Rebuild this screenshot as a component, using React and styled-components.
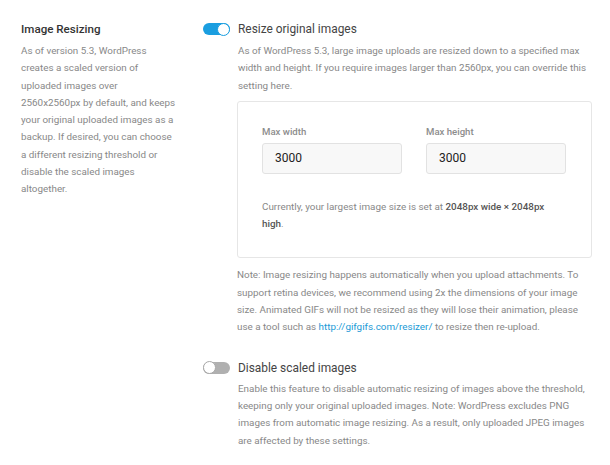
import React, { useState } from 'react';
import styled, { createGlobalStyle } from 'styled-components';

const GlobalStyle = createGlobalStyle`
  html, body {
    margin: 0;
    padding: 0;
    background: #ffffff;
  }
  body {
    font-family: Roboto, "Liberation Sans", Arial, sans-serif;
    -webkit-font-smoothing: antialiased;
  }
`;

const Page = styled.div`
  display: flex;
  padding: 20px 0 0 21px;
  width: 610px;
  box-sizing: border-box;
`;

const Sidebar = styled.div`
  width: 158px;
  flex-shrink: 0;
  margin-right: 24px;
`;

const SectionTitle = styled.h3`
  margin: 0;
  font-size: 11.6px;
  line-height: 18px;
  font-weight: 500;
  color: #333;
`;

const Text = styled.p`
  margin: ${props => props.margin || '0'};
  font-size: 9.85px;
  line-height: 17.3px;
  color: #888;
  strong {
    font-weight: 500;
    color: #555;
  }
  a {
    color: #1a9ad6;
    text-decoration: none;
  }
`;

const Main = styled.div`
  width: 389px;
  display: flex;
  flex-direction: column;
`;

const Setting = styled.div`
  display: flex;
  align-items: flex-start;
  margin-top: ${props => props.spaced ? '23px' : '0'};
`;

const Toggle = styled.button`
  position: relative;
  width: 27px;
  height: 12px;
  margin: 3px 8px 0 0;
  padding: 0;
  flex-shrink: 0;
  border: none;
  border-radius: 6px;
  background: ${props => props.on ? '#1a9ee0' : '#b0b0b0'};
  cursor: pointer;

  &::after {
    content: '';
    position: absolute;
    top: -0.5px;
    left: ${props => props.on ? '14px' : '-0.5px'};
    width: 11px;
    height: 11px;
    border-radius: 50%;
    background: #fff;
    border: 1px solid ${props => props.on ? '#1a9ee0' : '#a8a8a8'};
  }
`;

const SettingBody = styled.div`
  flex: 1;
  min-width: 0;
`;

const SettingTitle = styled.div`
  font-size: 11.9px;
  line-height: 18px;
  color: #444;
`;

const SizeBox = styled.div`
  margin: 7px 0 0 -1px;
  border: 1px solid #e6e6e6;
  border-radius: 3px;
  padding: 23px 24px 25px 24px;
`;

const Fields = styled.div`
  display: flex;
  gap: 24px;
`;

const Field = styled.label`
  display: flex;
  flex-direction: column;
  gap: 4px;
`;

const FieldLabel = styled.span`
  font-size: 9.6px;
  line-height: 14px;
  font-weight: 500;
  color: #8c8c8c;
`;

const NumberInput = styled.input`
  box-sizing: border-box;
  width: 140px;
  height: 31px;
  padding: 0 12px;
  border: 1px solid #e2e2e2;
  border-radius: 3px;
  background: #f8f8f8;
  font-family: Roboto, "Liberation Sans", Arial, sans-serif;
  font-size: 12px;
  color: #222;
  outline: none;
`;

export default function App() {
  const [resize, setResize] = useState(true);
  const [disable, setDisable] = useState(false);

  return (
    <>
      <GlobalStyle />
      <Page>
        <Sidebar>
          <SectionTitle>Image Resizing</SectionTitle>
          <Text margin="4px 0 0">
            As of version 5.3, WordPress creates a scaled version of uploaded images over
            2560x2560px by default, and keeps your original uploaded images as a backup. If
            desired, you can choose a different resizing threshold or disable the scaled
            images altogether.
          </Text>
        </Sidebar>
        <Main>
          <Setting>
            <Toggle on={resize ? 1 : 0} onClick={() => setResize(!resize)} aria-label="Resize original images" />
            <SettingBody>
              <SettingTitle>Resize original images</SettingTitle>
              <Text margin="4px 0 0">
                As of WordPress 5.3, large image uploads are resized down to a specified max
                width and height. If you require images larger than 2560px, you can override
                this setting here.
              </Text>
              <SizeBox>
                <Fields>
                  <Field>
                    <FieldLabel>Max width</FieldLabel>
                    <NumberInput defaultValue="3000" />
                  </Field>
                  <Field>
                    <FieldLabel>Max height</FieldLabel>
                    <NumberInput defaultValue="3000" />
                  </Field>
                </Fields>
                <Text margin="24px 0 0">
                  Currently, your largest image size is set at <strong>2048px wide × 2048px high</strong>.
                </Text>
              </SizeBox>
              <Text margin="8px 0 0 -1px">
                Note: Image resizing happens automatically when you upload attachments. To
                support retina devices, we recommend using 2x the dimensions of your image
                size. Animated GIFs will not be resized as they will lose their animation,
                please use a tool such as <a href="#">http://gifgifs.com/resizer/</a> to resize
                then re-upload.
              </Text>
            </SettingBody>
          </Setting>
          <Setting spaced>
            <Toggle on={disable ? 1 : 0} onClick={() => setDisable(!disable)} aria-label="Disable scaled images" />
            <SettingBody>
              <SettingTitle>Disable scaled images</SettingTitle>
              <Text margin="3px 0 0">
                Enable this feature to disable automatic resizing of images above the
                threshold, keeping only your original uploaded images. Note: WordPress
                excludes PNG images from automatic image resizing. As a result, only uploaded
                JPEG images are affected by these settings.
              </Text>
            </SettingBody>
          </Setting>
        </Main>
      </Page>
    </>
  );
}
